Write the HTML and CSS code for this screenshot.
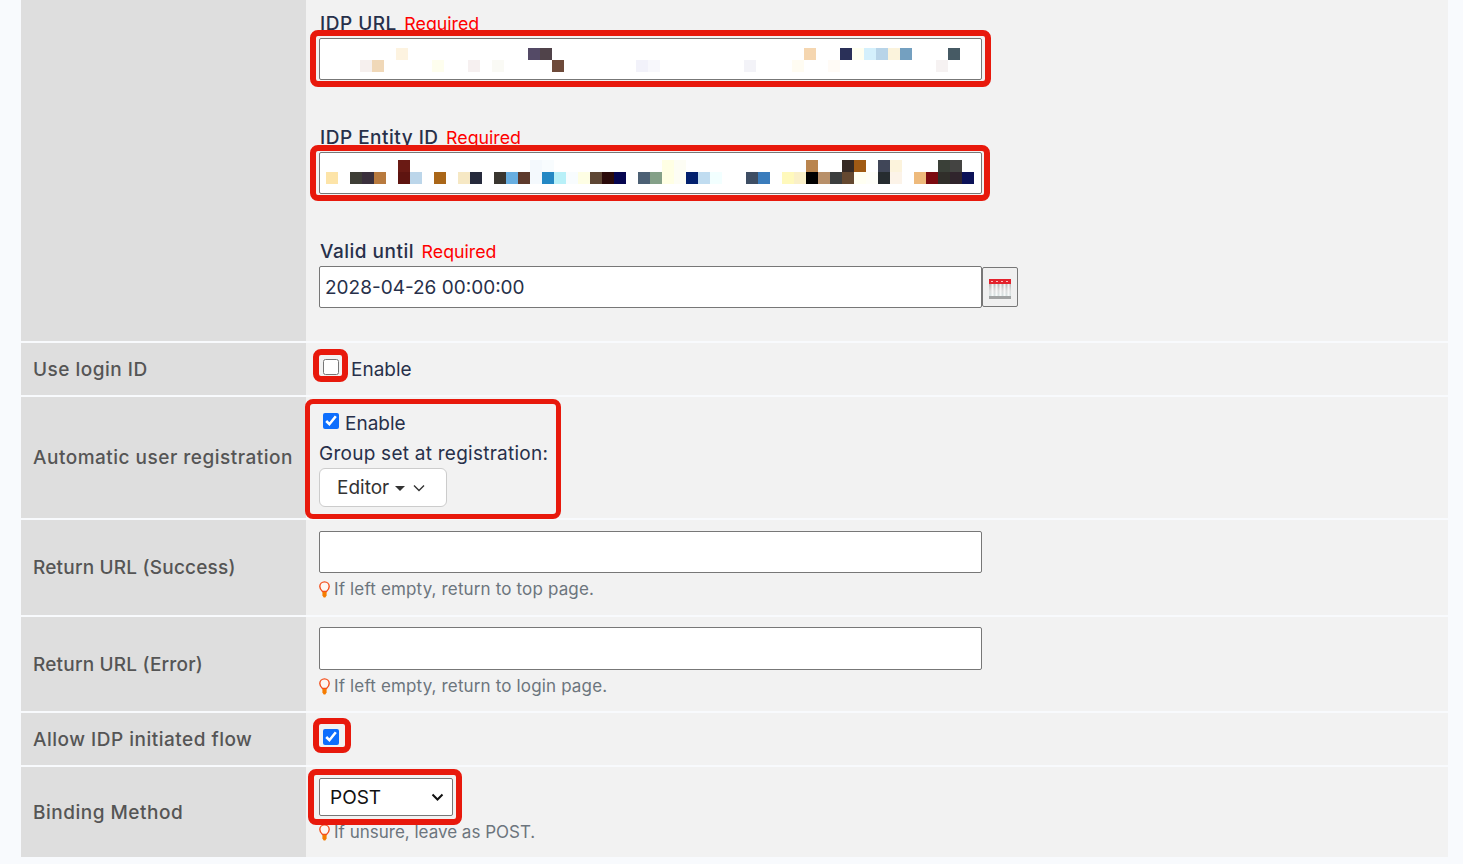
FILE: index.html
```html
<!DOCTYPE html>
<html lang="en">
<head>
    <meta charset="UTF-8">
    <title>SAML settings</title>
    <link rel="stylesheet" href="styles.css">
</head>

<body>
<div class="settings">
    <div class="row row-idp">
        <div class="row-label"></div>
        <div class="row-body">
            <div class="field">
                <div class="field-label">IDP URL <span class="required">Required</span></div>
                <div class="text-box">
                    <svg class="mosaic" width="661" height="40" viewBox="320 39 661 40">
                        <rect x="396" y="48" width="12" height="12" fill="#fdf3e0"/>
                        <rect x="528" y="48" width="12" height="12" fill="#544a66"/>
                        <rect x="540" y="48" width="12" height="12" fill="#50434a"/>
                        <rect x="804" y="48" width="12" height="12" fill="#f5d6b0"/>
                        <rect x="840" y="48" width="12" height="12" fill="#2a3058"/>
                        <rect x="852" y="48" width="12" height="12" fill="#fffff0"/>
                        <rect x="864" y="48" width="12" height="12" fill="#d4f0fc"/>
                        <rect x="876" y="48" width="12" height="12" fill="#b8d4e8"/>
                        <rect x="888" y="48" width="12" height="12" fill="#fbf3dc"/>
                        <rect x="900" y="48" width="12" height="12" fill="#74a0c0"/>
                        <rect x="948" y="48" width="12" height="12" fill="#465a64"/>
                        <rect x="360" y="60" width="12" height="12" fill="#f6f0ee"/>
                        <rect x="372" y="60" width="12" height="12" fill="#f0d8b8"/>
                        <rect x="432" y="60" width="12" height="12" fill="#fefeee"/>
                        <rect x="468" y="60" width="12" height="12" fill="#f6f0f0"/>
                        <rect x="492" y="60" width="12" height="12" fill="#fafaf5"/>
                        <rect x="552" y="60" width="12" height="12" fill="#6e4a3a"/>
                        <rect x="636" y="60" width="12" height="12" fill="#f2f2fa"/>
                        <rect x="648" y="60" width="12" height="12" fill="#f8f8fc"/>
                        <rect x="744" y="60" width="12" height="12" fill="#f3f3f8"/>
                        <rect x="792" y="60" width="12" height="12" fill="#fffcf2"/>
                        <rect x="828" y="60" width="12" height="12" fill="#fffbf6"/>
                        <rect x="936" y="60" width="12" height="12" fill="#f6f2f2"/>
                    </svg>
                </div>
            </div>
            <div class="field">
                <div class="field-label">IDP Entity ID <span class="required">Required</span></div>
                <div class="text-box">
                    <svg class="mosaic" width="661" height="40" viewBox="320 153 661 40">
                        <rect x="398" y="160" width="12" height="12" fill="#6a1a14"/>
                        <rect x="530" y="160" width="12" height="12" fill="#f4f9fd"/>
                        <rect x="542" y="160" width="12" height="12" fill="#f8fcfe"/>
                        <rect x="662" y="160" width="12" height="12" fill="#ffffe4"/>
                        <rect x="674" y="160" width="12" height="12" fill="#fdfdf4"/>
                        <rect x="806" y="160" width="12" height="12" fill="#ba854e"/>
                        <rect x="842" y="160" width="12" height="12" fill="#362a24"/>
                        <rect x="854" y="160" width="12" height="12" fill="#a05a14"/>
                        <rect x="878" y="160" width="12" height="12" fill="#404658"/>
                        <rect x="890" y="160" width="12" height="12" fill="#fcf3dc"/>
                        <rect x="938" y="160" width="12" height="12" fill="#3a4038"/>
                        <rect x="950" y="160" width="12" height="12" fill="#444442"/>
                        <rect x="326" y="172" width="12" height="12" fill="#fde4a8"/>
                        <rect x="350" y="172" width="12" height="12" fill="#3e3e36"/>
                        <rect x="362" y="172" width="12" height="12" fill="#3a303c"/>
                        <rect x="374" y="172" width="12" height="12" fill="#b87a3e"/>
                        <rect x="398" y="172" width="12" height="12" fill="#5e1410"/>
                        <rect x="410" y="172" width="12" height="12" fill="#bcd6ea"/>
                        <rect x="434" y="172" width="12" height="12" fill="#aa6618"/>
                        <rect x="458" y="172" width="12" height="12" fill="#f6e8c4"/>
                        <rect x="470" y="172" width="12" height="12" fill="#262a3c"/>
                        <rect x="494" y="172" width="12" height="12" fill="#3a3630"/>
                        <rect x="506" y="172" width="12" height="12" fill="#68aee0"/>
                        <rect x="518" y="172" width="12" height="12" fill="#5e3a2c"/>
                        <rect x="530" y="172" width="12" height="12" fill="#f4f9fd"/>
                        <rect x="542" y="172" width="12" height="12" fill="#2488c4"/>
                        <rect x="554" y="172" width="12" height="12" fill="#b8f0f8"/>
                        <rect x="566" y="172" width="12" height="12" fill="#f8fcfe"/>
                        <rect x="578" y="172" width="12" height="12" fill="#fefee4"/>
                        <rect x="590" y="172" width="12" height="12" fill="#5e4634"/>
                        <rect x="602" y="172" width="12" height="12" fill="#2a0a0a"/>
                        <rect x="614" y="172" width="12" height="12" fill="#060650"/>
                        <rect x="638" y="172" width="12" height="12" fill="#4c6074"/>
                        <rect x="650" y="172" width="12" height="12" fill="#84a088"/>
                        <rect x="662" y="172" width="12" height="12" fill="#ffffe4"/>
                        <rect x="674" y="172" width="12" height="12" fill="#fdfdf4"/>
                        <rect x="686" y="172" width="12" height="12" fill="#02206e"/>
                        <rect x="698" y="172" width="12" height="12" fill="#c0dcf0"/>
                        <rect x="710" y="172" width="12" height="12" fill="#f2ffff"/>
                        <rect x="746" y="172" width="12" height="12" fill="#3e4e64"/>
                        <rect x="758" y="172" width="12" height="12" fill="#3a7cbc"/>
                        <rect x="782" y="172" width="12" height="12" fill="#fff9bc"/>
                        <rect x="794" y="172" width="12" height="12" fill="#faf0c8"/>
                        <rect x="806" y="172" width="12" height="12" fill="#000000"/>
                        <rect x="818" y="172" width="12" height="12" fill="#b8906a"/>
                        <rect x="830" y="172" width="12" height="12" fill="#3c3e3e"/>
                        <rect x="842" y="172" width="12" height="12" fill="#644830"/>
                        <rect x="854" y="172" width="12" height="12" fill="#fffff2"/>
                        <rect x="866" y="172" width="12" height="12" fill="#fefef8"/>
                        <rect x="878" y="172" width="12" height="12" fill="#262c30"/>
                        <rect x="890" y="172" width="12" height="12" fill="#fcf3e8"/>
                        <rect x="914" y="172" width="12" height="12" fill="#eeba7c"/>
                        <rect x="926" y="172" width="12" height="12" fill="#7c0a10"/>
                        <rect x="938" y="172" width="12" height="12" fill="#302e2a"/>
                        <rect x="950" y="172" width="12" height="12" fill="#30242c"/>
                        <rect x="962" y="172" width="12" height="12" fill="#0c1258"/>
                    </svg>
                </div>
            </div>
            <div class="field">
                <div class="field-label">Valid until <span class="required">Required</span></div>
                <div class="date-group">
                    <input class="text-input" type="text" value="2028-04-26 00:00:00">
                    <button class="date-btn" type="button">
                        <svg width="24" height="20" viewBox="0 0 24 20">
                            <defs>
                                <linearGradient id="cal-body" x1="0" y1="0" x2="0" y2="1">
                                    <stop offset="0.2" stop-color="#b4b4b4"/>
                                    <stop offset="0.6" stop-color="#dedede"/>
                                    <stop offset="1" stop-color="#d4e6e6"/>
                                </linearGradient>
                            </defs>
                            <rect x="1" y="0" width="22" height="20" fill="url(#cal-body)"/>
                            <rect x="1" y="0" width="22" height="5" fill="#e3222c"/>
                            <path d="M3 2.500h2M8 2.500h2M13 2.500h2M18 2.500h2" stroke="#f8c0c0" stroke-width="1"/>
                            <path d="M4.500 5v12M8.500 5v12M12.500 5v12M16.500 5v12M20.500 5v12" stroke="#fff" stroke-width="2" opacity="0.800"/>
                            <rect x="1" y="17" width="22" height="3" fill="#a2a4a4"/>
                        </svg>
                    </button>
                </div>
            </div>
        </div>
    </div>

    <div class="row row-login">
        <div class="row-label">Use login ID</div>
        <div class="row-body">
            <label class="check-line"><input type="checkbox"><span>Enable</span></label>
        </div>
    </div>

    <div class="row row-auto">
        <div class="row-label row-label-up">Automatic user registration</div>
        <div class="row-body">
            <label class="check-line check-tight"><input type="checkbox" checked><span>Enable</span></label>
            <div class="group-label">Group set at registration:</div>
            <button class="group-btn" type="button">
                Editor
                <span class="caret"></span>
                <svg width="12" height="8" viewBox="0 0 12 8"><path d="M1 1.500l5 5 5-5" fill="none" stroke="#333" stroke-width="1.400"/></svg>
            </button>
        </div>
    </div>

    <div class="row row-return">
        <div class="row-label row-label-up row-label-narrow">Return URL (Success)</div>
        <div class="row-body">
            <input class="text-input" type="text">
            <div class="hint">
                <svg class="bulb" width="11" height="17" viewBox="0 0 11 17"><path d="M3.500 10.500C1.800 9 .8 7.500.8 5.600a4.700 4.700 0 0 1 9.400 0c0 1.900-1 3.400-2.700 4.900z" fill="#fdf6f2" stroke="#f4511e" stroke-width="1.400"/><path d="M3.400 11h4.200v3.500L6.300 16.500H4.700L3.400 14.500z" fill="#f57c00"/></svg>
                If left empty, return to top page.
            </div>
        </div>
    </div>

    <div class="row row-return row-error">
        <div class="row-label row-label-narrow">Return URL (Error)</div>
        <div class="row-body">
            <input class="text-input" type="text">
            <div class="hint">
                <svg class="bulb" width="11" height="17" viewBox="0 0 11 17"><path d="M3.500 10.500C1.800 9 .8 7.500.8 5.600a4.700 4.700 0 0 1 9.400 0c0 1.900-1 3.400-2.700 4.900z" fill="#fdf6f2" stroke="#f4511e" stroke-width="1.400"/><path d="M3.400 11h4.200v3.500L6.300 16.500H4.700L3.400 14.500z" fill="#f57c00"/></svg>
                If left empty, return to login page.
            </div>
        </div>
    </div>

    <div class="row row-flow">
        <div class="row-label">Allow IDP initiated flow</div>
        <div class="row-body">
            <label class="check-line"><input type="checkbox" checked></label>
        </div>
    </div>

    <div class="row row-binding">
        <div class="row-label">Binding Method</div>
        <div class="row-body">
            <select class="binding-select"><option>POST</option><option>Redirect</option></select>
            <div class="hint hint-tight">
                <svg class="bulb" width="11" height="17" viewBox="0 0 11 17"><path d="M3.500 10.500C1.800 9 .8 7.500.8 5.600a4.700 4.700 0 0 1 9.400 0c0 1.900-1 3.400-2.700 4.900z" fill="#fdf6f2" stroke="#f4511e" stroke-width="1.400"/><path d="M3.400 11h4.200v3.500L6.300 16.500H4.700L3.400 14.500z" fill="#f57c00"/></svg>
                If unsure, leave as POST.
            </div>
        </div>
    </div>

    <!-- red review marks drawn on top of the form -->
    <div class="mark mark-url"></div>
    <div class="mark mark-entity"></div>
    <div class="mark mark-login"></div>
    <div class="mark mark-auto"></div>
    <div class="mark mark-flow"></div>
    <div class="mark mark-binding"></div>
</div>
</body>
</html>
```

FILE: styles.css
```css
*{
    box-sizing: border-box;
}
body{
    margin: 0;
    background-color: #f8fafd;
    font-family: "Inter", "Noto Sans", sans-serif;
    font-size: 19px;
    color: #27304a;
}
.settings{
    position: relative;
    width: 1427px;
    margin-left: 21px;
    padding-bottom: 7px;
    display: flex;
    flex-direction: column;
    gap: 2px;
}
.row{
    display: flex;
    background-color: #f2f2f2;
}
.row-label{
    flex: 0 0 285px;
    padding-left: 12px;
    display: flex;
    align-items: center;
    background-color: #dedede;
    color: #555;
    font-weight: 500;
    font-size: 19px;
    letter-spacing: .5px;
}
.row-label-up{
    padding-bottom: 1px;
}
.row-label-narrow{
    letter-spacing: .2px;
}
.row-body{
    flex: 1;
    padding-left: 13px;
}
.row-idp{
    height: 341px;
}
.row-idp .row-body{
    padding-top: 12px;
}
.row-login{
    height: 52px;
}
.row-auto{
    height: 121px;
}
.row-return{
    height: 95px;
}
.row-error{
    height: 94px;
}
.row-flow{
    height: 52px;
}
.row-binding{
    height: 90px;
}
.field{
    margin-bottom: 46px;
}
.field-label{
    height: 26px;
    line-height: 24px;
    padding-left: 1px;
    font-size: 19px;
    font-weight: 500;
    letter-spacing: .5px;
}
.required{
    margin-left: 2px;
    font-size: 17.800px;
    font-weight: 400;
    letter-spacing: 0;
    color: #f00;
}
.text-box{
    width: 663px;
    height: 42px;
    background-color: #fff;
    border: 1px solid #777;
    border-radius: 2px;
}
.mosaic{
    display: block;
}
.text-input{
    display: block;
    width: 663px;
    height: 42px;
    padding: 0 5px;
    background-color: #fff;
    border: 1px solid #777;
    border-radius: 2px;
    font: inherit;
    color: #27304a;
}
.date-group{
    display: flex;
    align-items: center;
}
.date-btn{
    width: 36px;
    height: 40px;
    padding: 0;
    display: flex;
    align-items: center;
    justify-content: center;
    background-color: #f0f0f0;
    border: 1px solid #777;
    border-radius: 2px;
}
.date-btn svg{
    margin-top: 3px;
}
.check-line{
    display: flex;
    align-items: center;
    height: 52px;
}
.check-line input{
    width: 16px;
    height: 16px;
    margin: 0 12px 4px 4px;
    accent-color: #0d6efd;
}
.check-tight{
    height: 30px;
    margin-top: 11px;
}
.check-tight input{
    margin-right: 6px;
}
.group-label{
    height: 30px;
    line-height: 32px;
    letter-spacing: .25px;
}
.group-btn{
    display: flex;
    align-items: center;
    width: 128px;
    height: 39px;
    padding: 0 0 0 17px;
    background-color: #fff;
    border: 1px solid #ccc;
    border-radius: 6px;
    font: inherit;
    color: #333;
}
.caret{
    width: 0;
    height: 0;
    margin: 2px 8px 0 6px;
    border-top: 5px solid #333;
    border-left: 5px solid transparent;
    border-right: 5px solid transparent;
}
.row-return .text-input{
    margin-top: 11px;
}
.row-error .text-input{
    height: 43px;
    margin-top: 10px;
}
.hint{
    display: flex;
    align-items: center;
    gap: 4px;
    height: 32px;
    font-size: 17px;
    letter-spacing: .15px;
    color: #6c757d;
}
.hint-tight{
    height: 24px;
    margin-top: 4px;
    letter-spacing: 0;
}
.binding-select{
    display: block;
    width: 134px;
    height: 38px;
    margin-top: 11px;
    padding-left: 10px;
    appearance: none;
    background: #fff url("data:image/svg+xml,%3Csvg xmlns='http://www.w3.org/2000/svg' width='13' height='8' viewBox='0 0 13 8'%3E%3Cpath d='M1.500 1.500l5 5 5-5' fill='none' stroke='%23111' stroke-width='2'/%3E%3C/svg%3E") no-repeat right 8px center;
    border: 1px solid #777;
    border-radius: 2px;
    font: inherit;
    color: #111;
}
.mark{
    position: absolute;
    border: 6px solid #e8190c;
    border-radius: 8px;
}
.mark-url{
    left: 289px;
    top: 30px;
    width: 681px;
    height: 57px;
}
.mark-entity{
    left: 289px;
    top: 145px;
    width: 680px;
    height: 56px;
}
.mark-login{
    left: 292px;
    top: 349px;
    width: 35px;
    height: 33px;
}
.mark-auto{
    left: 284px;
    top: 399px;
    width: 256px;
    height: 120px;
    border-width: 5px;
}
.mark-flow{
    left: 292px;
    top: 718px;
    width: 38px;
    height: 35px;
}
.mark-binding{
    left: 287px;
    top: 769px;
    width: 154px;
    height: 56px;
}
```
